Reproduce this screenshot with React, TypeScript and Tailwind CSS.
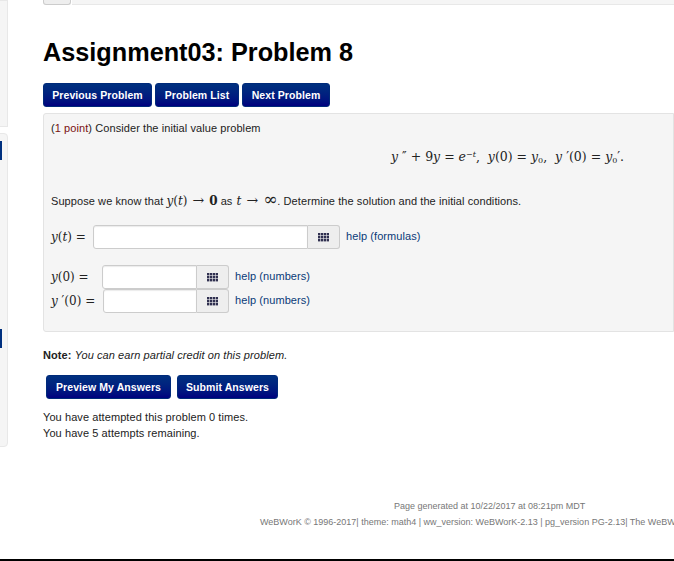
const MATH = "[font-family:'DejaVu_Serif','Liberation_Serif',serif]";

function NavButton({ label, className = '' }: { label: string; className?: string }) {
  return (
    <button className={`h-6 rounded-[3px] border border-[#002a7a] bg-gradient-to-b from-[#00307f] to-[#00007f] text-[10.5px] font-bold text-white ${className}`}>
      {label}
    </button>
  );
}

function GridIcon() {
  return (
    <svg width="11" height="9" viewBox="0 0 11 9" className="fill-[#2f2f4f]">
      {[0, 3, 6].map((y) =>
        [0, 3, 6, 9].map((x) => <rect key={`${x}-${y}`} x={x} y={y} width="2.4" height="2.4" />),
      )}
    </svg>
  );
}

function AnswerInput({ width, help }: { width: string; help: string }) {
  return (
    <div className="flex items-center">
      <div className={`h-6 rounded-l-[3px] border border-[#ccc] bg-white shadow-[inset_0_1px_1px_rgba(0,0,0,0.08)] ${width}`} />
      <div className="flex h-6 w-[32px] items-center justify-center rounded-r-[3px] border border-l-0 border-[#ccc] bg-[#eeeeee]">
        <GridIcon />
      </div>
      <span className="mb-[2px] ml-[6px] text-[#0a3a78]">{help}</span>
    </div>
  );
}

export default function App() {
  return (
    <div className="relative flex h-[561px] w-[674px] flex-col overflow-hidden bg-white font-['Liberation_Sans',Arial,sans-serif] text-[11px] leading-[16px] tracking-[0.08px] text-[#222]">
      <div className="absolute left-[-10px] top-0 h-[127px] w-[18px] border border-[#e8e8e8] bg-[#f5f5f5]" />
      <div className="absolute left-[-10px] top-[133px] h-[314px] w-[18px] rounded-[4px] border border-[#e8e8e8] bg-[#f5f5f5]" />
      <div className="absolute left-0 top-[141px] h-[19px] w-[2px] bg-[#00307f]" />
      <div className="absolute left-0 top-[329px] h-[19px] w-[2px] bg-[#00307f]" />

      <div className="ml-[43px] flex-1">
        <div className="flex h-[5px]">
          <div className="h-[5px] w-[28px] rounded-b-[3px] border border-t-0 border-[#ccc] bg-[#eee]" />
          <div className="ml-[1px] h-[5px] flex-1 border-b border-[#e8e8e8] bg-[#f5f5f5]" />
        </div>

        <h1 className="mt-[31px] text-[25.25px] font-bold leading-[33px] tracking-normal text-black">Assignment03: Problem 8</h1>

        <div className="mt-[14px] flex gap-[3px]">
          <NavButton label="Previous Problem" className="w-[109px]" />
          <NavButton label="Problem List" className="w-[84px]" />
          <NavButton label="Next Problem" className="w-[88px]" />
        </div>

        <div className="mt-[6px] h-[219px] rounded-l-[3px] border border-[#e3e3e3] bg-[#f5f5f5] pl-[7px] pt-[6px]">
          <p>
            (<span className="text-[#7a1010]">1 point</span>) Consider the initial value problem
          </p>
          <p className={`mt-[13px] whitespace-nowrap pl-[340px] text-[12.5px] leading-[16px] tracking-normal ${MATH}`}>
            <i>y</i> ″ + 9<i>y</i> = <i>e</i>
            <sup className="text-[8px]">−<i>t</i></sup>,&nbsp;&nbsp;<i>y</i>(0) = <i>y</i>
            <sub className="text-[8px]">0</sub>,&nbsp;&nbsp;<i>y</i> ′(0) = <i>y</i>
            <sub className="text-[8px]">0</sub>′.
          </p>
          <p className="mt-[28px] whitespace-nowrap">
            Suppose we know that{' '}
            <span className={`text-[12px] leading-[12px] tracking-normal ${MATH}`}>
              <i>y</i>(<i>t</i>)<span className="mx-[5px] text-[14px] leading-[12px]">→</span><b>0</b>
            </span>{' '}
            as{' '}
            <span className={`ml-[1px] text-[12px] leading-[12px] tracking-normal ${MATH}`}>
              <i>t</i>
              <span className="mx-[5px] text-[14px] leading-[12px]">→</span>
              <span className="text-[17px] leading-[12px]">∞</span>
            </span>
            . Determine the solution and the initial conditions.
          </p>

          <div className="mt-[16px] flex items-center">
            <span className={`w-[42px] whitespace-nowrap text-[12px] tracking-normal ${MATH}`}><i>y</i>(<i>t</i>) =</span>
            <AnswerInput width="w-[215px]" help="help (formulas)" />
          </div>

          <div className="mt-[16px] flex items-center">
            <span className={`w-[51px] whitespace-nowrap text-[12px] tracking-normal ${MATH}`}><i>y</i>(0) =</span>
            <AnswerInput width="w-[95px]" help="help (numbers)" />
          </div>
          <div className="flex items-center">
            <span className={`w-[52px] whitespace-nowrap text-[12px] tracking-normal ${MATH}`}><i>y</i> ′(0) =</span>
            <AnswerInput width="w-[94px]" help="help (numbers)" />
          </div>
        </div>

        <p className="mt-[17px] leading-[13px]">
          <b>Note:</b> <i>You can earn partial credit on this problem.</i>
        </p>

        <div className="ml-[3px] mt-[13px] flex gap-[6px]">
          <NavButton label="Preview My Answers" className="w-[125px]" />
          <NavButton label="Submit Answers" className="w-[101px]" />
        </div>

        <p className="mt-[10px] leading-[16px]">
          You have attempted this problem 0 times.
          <br />
          You have 5 attempts remaining.
        </p>
      </div>

      <footer className="mb-[29px] ml-[260px] whitespace-nowrap text-[9px] leading-[16px] tracking-normal text-[#777]">
        <p className="ml-[134px]">Page generated at 10/22/2017 at 08:21pm MDT</p>
        <p>WeBWorK © 1996-2017| theme: math4 | ww_version: WeBWorK-2.13 | pg_version PG-2.13| The WeBWorK Project</p>
      </footer>
      <div className="h-[2px] bg-black" />
    </div>
  );
}
